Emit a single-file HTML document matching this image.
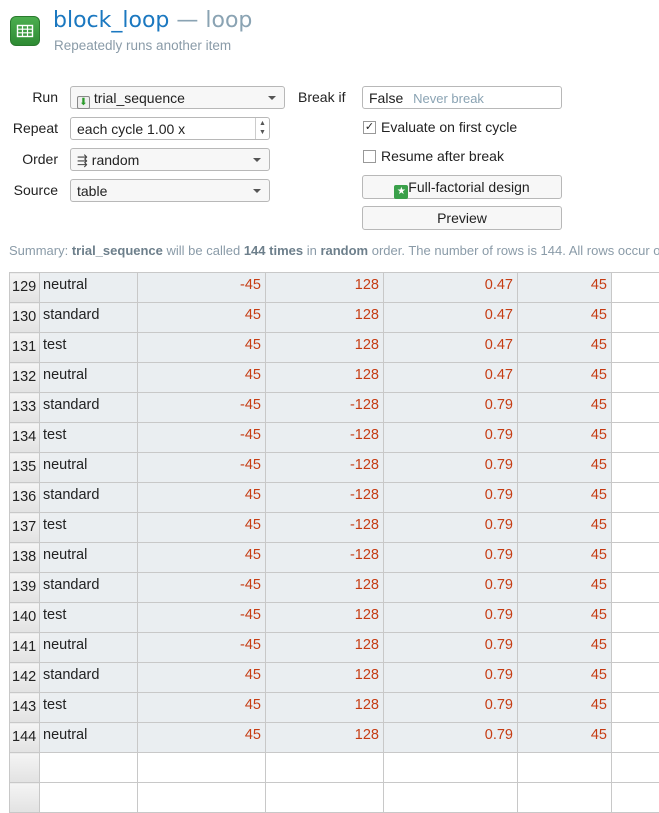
<!DOCTYPE html>
<html><head><meta charset="utf-8"><style>
*{box-sizing:border-box;margin:0;padding:0}
body{width:659px;height:787px;overflow:hidden;background:#fff;font-family:"Liberation Sans","DejaVu Sans",sans-serif;font-size:14px;color:#222;position:relative}
.a{position:absolute}
.lbl{position:absolute;text-align:right;width:58px;font-size:14px}
.box{position:absolute;border:1px solid #b8b8b8;border-radius:3px;background:#f7f7f7;height:23px;padding:2px 6px;font-size:14px;line-height:18px}
.tri{position:absolute;right:8px;top:9px;width:0;height:0;border-left:4px solid transparent;border-right:4px solid transparent;border-top:4px solid #555}
.cb{position:absolute;width:13px;height:13px;border:1px solid #999;background:#fff;font-size:11px;line-height:11px;text-align:center}
table{position:absolute;left:9px;top:272px;border-collapse:collapse;table-layout:fixed;width:662px}
td{border:1px solid #c8c8c8;height:30px;vertical-align:top;padding:3px 3px 0;font-size:14.5px;line-height:18px;background:#eaeef1;overflow:hidden;white-space:nowrap}
td.n{background:linear-gradient(#f4f4f4,#e2e2e2);padding:5px 1px 0 2px;color:#222}
td.r{text-align:right;color:#c63c13;padding-right:4px}
td.e{background:#fff}
</style></head><body>
<div class="a" style="left:10px;top:16px;width:30px;height:30px;border-radius:6px;background:linear-gradient(#4cae4f,#2e8b34);border:1px solid #2a7a2e">
<svg width="28" height="28" viewBox="0 0 28 28" style="position:absolute;left:0;top:0"><rect x="6.5" y="8.5" width="15" height="11" fill="none" stroke="#fff" stroke-width="1.4"/><path d="M6.5 12.2h15M6.5 15.8h15M11.5 8.5v11M16.5 8.5v11" stroke="#fff" stroke-width="1.2"/></svg></div>
<div class="a" style="left:53px;top:8px;font-family:'DejaVu Sans',sans-serif;font-size:22px;color:#1b78c0;white-space:nowrap">block_loop <span style="color:#8aa3b3">— loop</span></div>
<div class="a" style="left:54px;top:38px;font-size:13.5px;color:#8a9ba8">Repeatedly runs another item</div>

<div class="lbl" style="left:0;top:89px">Run</div>
<div class="box" style="left:70px;top:86px;width:215px"><span style="display:inline-block;width:13px;height:13px;border:1px solid #888;border-radius:2px;background:#eee;vertical-align:-2px;color:#2a9a2a;font-size:10px;line-height:11px;text-align:center">⬇</span> trial_sequence<div class="tri"></div></div>
<div class="lbl" style="left:0;top:120px">Repeat</div>
<div class="box" style="left:70px;top:117px;width:200px;background:#fff">each cycle 1.00 x<div style="position:absolute;right:0;top:0;width:14px;height:21px;border-left:1px solid #ccc;font-size:7px;line-height:9px;text-align:center;color:#555;padding-top:1px">▲<br>▼</div></div>
<div class="lbl" style="left:0;top:151px">Order</div>
<div class="box" style="left:70px;top:148px;width:200px"><span style="font-size:13px;color:#444">⇶</span> random<div class="tri"></div></div>
<div class="lbl" style="left:0;top:182px">Source</div>
<div class="box" style="left:70px;top:179px;width:200px">table<div class="tri"></div></div>

<div class="a" style="left:298px;top:89px">Break if</div>
<div class="box" style="left:362px;top:86px;width:200px;background:#fff">False <span style="color:#8aa3b3;font-size:13px;margin-left:6px">Never break</span></div>
<div class="cb" style="left:363px;top:121px">✓</div><div class="a" style="left:381px;top:119px">Evaluate on first cycle</div>
<div class="cb" style="left:363px;top:150px"></div><div class="a" style="left:381px;top:148px">Resume after break</div>
<div class="box" style="left:362px;top:175px;width:200px;height:24px;text-align:center"><span style="display:inline-block;width:14px;height:14px;border-radius:2px;background:#3aa04a;color:#fff;font-size:10px;line-height:14px;vertical-align:-2px">★</span>Full-factorial design</div>
<div class="box" style="left:362px;top:206px;width:200px;height:24px;text-align:center">Preview</div>

<div class="a" style="left:9px;top:243px;font-size:13px;color:#8a9ba8;white-space:nowrap">Summary: <b style="color:#6d7f8b">trial_sequence</b> will be called <b style="color:#6d7f8b">144 times</b> in <b style="color:#6d7f8b">random</b> order. The number of rows is 144. All rows occur once</div>

<table>
<colgroup><col style="width:30px"><col style="width:98px"><col style="width:128px"><col style="width:118px"><col style="width:134px"><col style="width:94px"><col style="width:60px"></colgroup>
<tr><td class="n">129</td><td>neutral</td><td class="r">-45</td><td class="r">128</td><td class="r">0.47</td><td class="r">45</td><td class="e"></td></tr>
<tr><td class="n">130</td><td>standard</td><td class="r">45</td><td class="r">128</td><td class="r">0.47</td><td class="r">45</td><td class="e"></td></tr>
<tr><td class="n">131</td><td>test</td><td class="r">45</td><td class="r">128</td><td class="r">0.47</td><td class="r">45</td><td class="e"></td></tr>
<tr><td class="n">132</td><td>neutral</td><td class="r">45</td><td class="r">128</td><td class="r">0.47</td><td class="r">45</td><td class="e"></td></tr>
<tr><td class="n">133</td><td>standard</td><td class="r">-45</td><td class="r">-128</td><td class="r">0.79</td><td class="r">45</td><td class="e"></td></tr>
<tr><td class="n">134</td><td>test</td><td class="r">-45</td><td class="r">-128</td><td class="r">0.79</td><td class="r">45</td><td class="e"></td></tr>
<tr><td class="n">135</td><td>neutral</td><td class="r">-45</td><td class="r">-128</td><td class="r">0.79</td><td class="r">45</td><td class="e"></td></tr>
<tr><td class="n">136</td><td>standard</td><td class="r">45</td><td class="r">-128</td><td class="r">0.79</td><td class="r">45</td><td class="e"></td></tr>
<tr><td class="n">137</td><td>test</td><td class="r">45</td><td class="r">-128</td><td class="r">0.79</td><td class="r">45</td><td class="e"></td></tr>
<tr><td class="n">138</td><td>neutral</td><td class="r">45</td><td class="r">-128</td><td class="r">0.79</td><td class="r">45</td><td class="e"></td></tr>
<tr><td class="n">139</td><td>standard</td><td class="r">-45</td><td class="r">128</td><td class="r">0.79</td><td class="r">45</td><td class="e"></td></tr>
<tr><td class="n">140</td><td>test</td><td class="r">-45</td><td class="r">128</td><td class="r">0.79</td><td class="r">45</td><td class="e"></td></tr>
<tr><td class="n">141</td><td>neutral</td><td class="r">-45</td><td class="r">128</td><td class="r">0.79</td><td class="r">45</td><td class="e"></td></tr>
<tr><td class="n">142</td><td>standard</td><td class="r">45</td><td class="r">128</td><td class="r">0.79</td><td class="r">45</td><td class="e"></td></tr>
<tr><td class="n">143</td><td>test</td><td class="r">45</td><td class="r">128</td><td class="r">0.79</td><td class="r">45</td><td class="e"></td></tr>
<tr><td class="n">144</td><td>neutral</td><td class="r">45</td><td class="r">128</td><td class="r">0.79</td><td class="r">45</td><td class="e"></td></tr>
<tr><td class="n"></td><td class="e"></td><td class="e"></td><td class="e"></td><td class="e"></td><td class="e"></td><td class="e"></td></tr>
<tr><td class="n"></td><td class="e"></td><td class="e"></td><td class="e"></td><td class="e"></td><td class="e"></td><td class="e"></td></tr>
</table>
</body></html>
